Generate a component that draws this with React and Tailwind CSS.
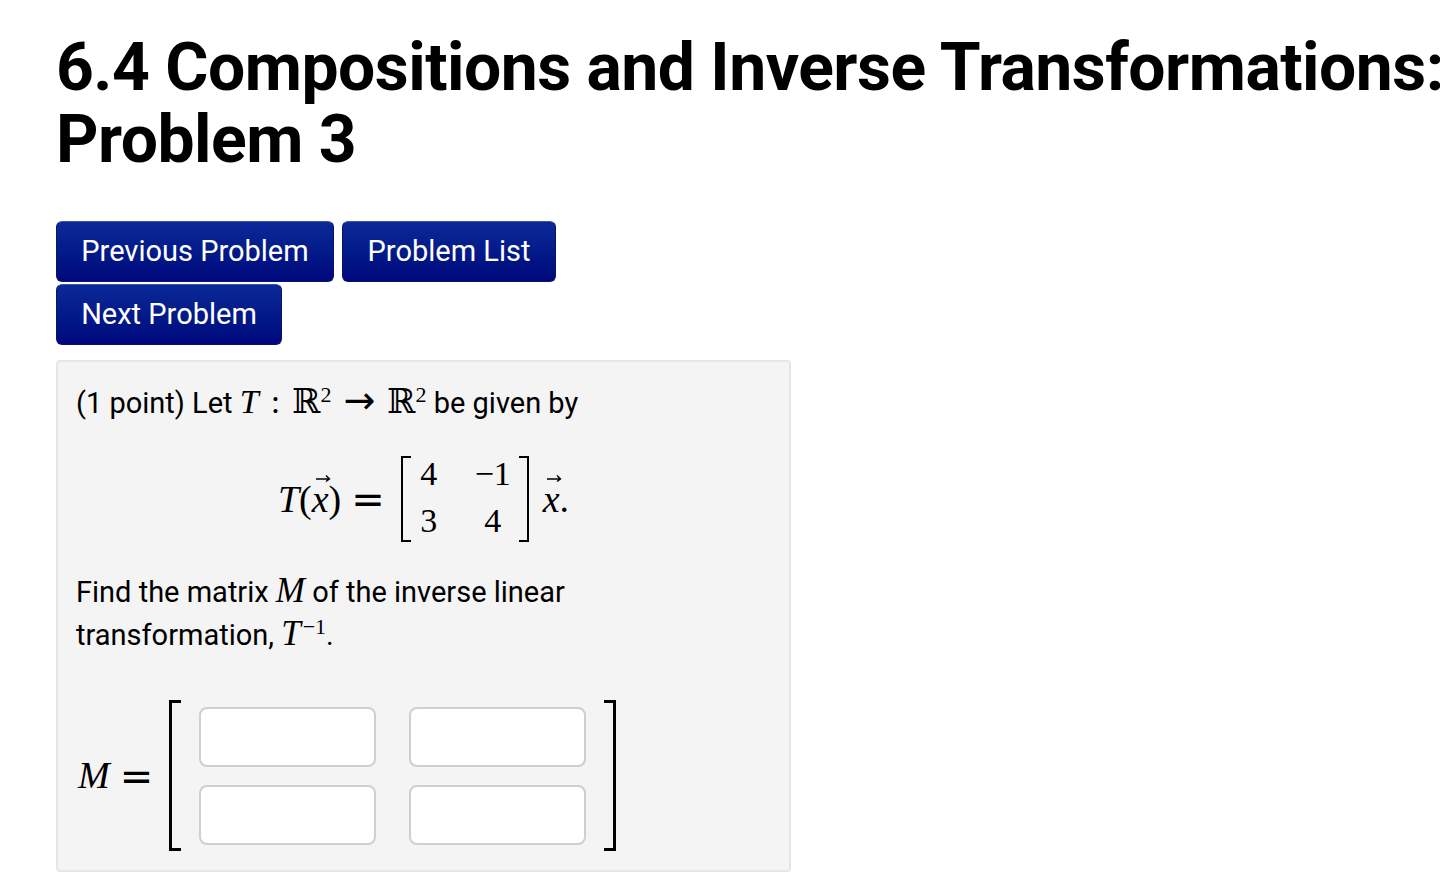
import React from "react";

const serif = { fontFamily: '"Liberation Serif", "DejaVu Serif", serif' };
const sym = { fontFamily: '"DejaVu Sans", "DejaVu Serif", "Noto Sans", sans-serif' };

function NavButton({ children, className = "" }) {
  return (
    <button
      type="button"
      className={
        "flex h-[61px] items-center justify-center whitespace-nowrap rounded-[6px] border border-[#06166a] border-t-[#3a56b8] bg-gradient-to-b from-[#0c2898] to-[#00077c] text-[29px] leading-none text-white " +
        className
      }
    >
      {children}
    </button>
  );
}

// x with a vector arrow over it
function Vec() {
  return (
    <span className="relative inline-block">
      <i>x</i>
      <svg
        className="absolute top-[2px] left-[3px]"
        width="16"
        height="10"
        viewBox="0 0 16 10"
        fill="none"
        stroke="black"
        strokeWidth="1.4"
      >
        <path d="M1 6h13.5M11 2.5l3.5 3.5L11 8.5" />
      </svg>
    </span>
  );
}

function Cell() {
  return <div className="h-[60px] w-[177px] rounded-[8px] border-2 border-[#cfcfcf] bg-white" />;
}

export default function App() {
  return (
    <div
      className="min-h-screen w-full overflow-hidden bg-white text-black"
      style={{ fontFamily: 'Roboto, "Liberation Sans", sans-serif' }}
    >
      <div className="pl-[56px] pt-[32px]">
        <h1 className="whitespace-nowrap text-[66px] font-bold leading-[72px] tracking-[-0.5px]">
          6.4 Compositions and Inverse Transformations:
          <br />
          Problem 3
        </h1>

        <div className="mt-[45px] flex w-[520px] flex-wrap gap-x-[8px] gap-y-[2px]">
          <NavButton className="w-[278px]">Previous Problem</NavButton>
          <NavButton className="w-[214px]">Problem List</NavButton>
          <NavButton className="w-[226px]">Next Problem</NavButton>
        </div>

        <div className="mt-[15px] w-[735px] rounded-[4px] border-2 border-[#e6e6e6] bg-[#f4f4f4] px-[18px] pb-[19px] pt-[18px] text-[29px]">
          <p className="flex items-baseline leading-[44px]">
            <span>(1 point) Let&nbsp;</span>
            <span style={serif} className="text-[34px]">
              <i>T</i>
              <span className="mx-[12px]">:</span>ℝ<sup className="text-[22px]">2</sup>
              <span style={sym} className="mx-[12px] text-[38px] leading-none">→</span>ℝ<sup className="text-[22px]">2</sup>
            </span>
            <span>&nbsp;be given by</span>
          </p>

          <div className="mt-[31px] flex items-center justify-center text-[34px]" style={serif}>
            <span className="text-[38px]">
              <i>T</i>(<Vec />)
            </span>
            <span style={sym} className="mx-[10px] text-[40px] leading-none">=</span>
            <div className="ml-[6px] flex items-stretch">
              <div className="w-[10px] border-y-2 border-l-2 border-black" />
              <div className="grid grid-cols-[28px_44px] gap-x-[28px] gap-y-[12px] px-[4px] pb-[4px] text-center leading-[35px]">
                <span>4</span>
                <span>−1</span>
                <span>3</span>
                <span>4</span>
              </div>
              <div className="w-[10px] border-y-2 border-r-2 border-black" />
            </div>
            <span className="ml-[14px] text-[38px]">
              <Vec />.
            </span>
          </div>

          <p className="mt-[28px] leading-[42px]">
            Find the matrix <i style={serif} className="text-[35px]">M</i> of the inverse linear
            <br />
            transformation, <i style={serif} className="text-[35px]">T</i>
            <sup style={serif} className="ml-[2px] text-[22px]">−1</sup>.
          </p>

          <div className="mt-[44px] flex items-center">
            <span style={serif} className="flex items-center pl-[2px] text-[38px]">
              <i>M</i>
              <span style={sym} className="ml-[10px] text-[40px] leading-none">=</span>
            </span>
            <div className="ml-[16px] flex items-stretch">
              <div className="w-[12px] border-y-[3px] border-l-[3px] border-black" />
              <div className="grid grid-cols-2 gap-x-[33px] gap-y-[18px] px-[18px] pb-[6px] pt-[7px]">
                <Cell />
                <Cell />
                <Cell />
                <Cell />
              </div>
              <div className="w-[12px] border-y-[3px] border-r-[3px] border-black" />
            </div>
          </div>
        </div>
      </div>
    </div>
  );
}
